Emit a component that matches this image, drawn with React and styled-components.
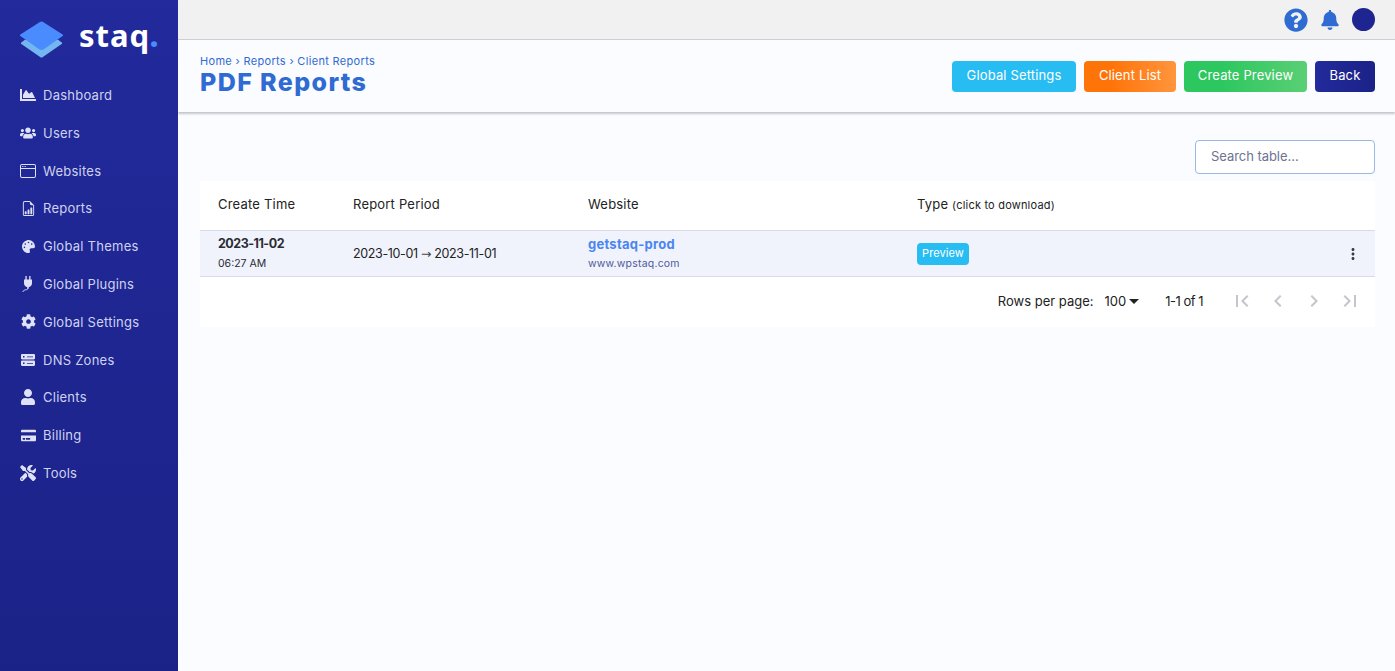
import React from 'react';
import styled, { createGlobalStyle } from 'styled-components';
import {
  FaChartArea, FaUsers, FaPalette, FaCog, FaUser, FaCreditCard, FaTools,
  FaQuestionCircle, FaBell,
} from 'react-icons/fa';
import { BsFileEarmarkBarGraph, BsWindow } from 'react-icons/bs';
import {
  MdMoreVert, MdFirstPage, MdLastPage, MdChevronLeft, MdChevronRight, MdArrowDropDown,
} from 'react-icons/md';

const FONT = `Inter, "Noto Sans", "Liberation Sans", sans-serif`;

const GlobalStyle = createGlobalStyle`
  html, body { margin: 0; height: 100%; }
  #root { height: 100%; }
  body {
    font-family: ${FONT};
    background: #fbfcff;
    color: #222;
    overflow: hidden;
  }
  * { box-sizing: border-box; }
`;

const Shell = styled.div`
  display: flex;
  width: 100%;
  height: 671px;
`;

const Sidebar = styled.aside`
  width: 178px;
  flex: none;
  background: linear-gradient(180deg, #222a9c 0%, #1b2287 100%);
  display: flex;
  flex-direction: column;
`;

const Brand = styled.div`
  display: flex;
  align-items: center;
  gap: 16px;
  height: 76.2px;
  padding: 4px 0 0 20px;
`;

const BrandName = styled.span`
  font-family: "Noto Sans", sans-serif;
  font-weight: 700;
  font-size: 31px;
  line-height: 1;
  color: #fff;
  margin-top: -9px;
  letter-spacing: 1px;

  i {
    font-style: normal;
    font-size: 34px;
    line-height: 0;
    margin-left: -1px;
    color: #4a8cff;
  }
`;

const Nav = styled.nav`
  display: flex;
  flex-direction: column;
`;

const NavItem = styled.a`
  display: flex;
  align-items: center;
  height: 37.8px;
  padding-left: 20px;
  color: #cfd3f0;
  font-size: 13px;
  letter-spacing: 0.25px;
`;

const NavIcon = styled.span`
  display: flex;
  align-items: center;
  justify-content: center;
  width: 16px;
  margin-right: 7px;
  color: #dfe2f7;

  svg {
    width: ${(p) => p.$size || 16}px;
    height: ${(p) => p.$size || 16}px;
  }
`;

const Main = styled.div`
  flex: 1;
  min-width: 0;
  display: flex;
  flex-direction: column;
`;

const TopBar = styled.header`
  height: 40px;
  flex: none;
  background: #f1f1f1;
  border-bottom: 1px solid #cfcfd2;
  display: flex;
  align-items: center;
  justify-content: flex-end;
  gap: 12px;
  padding-right: 20px;
`;

const TopIcon = styled.span`
  display: flex;
  color: #2f6bd2;

  svg {
    width: ${(p) => p.$size}px;
    height: ${(p) => p.$size}px;
  }
`;

const Avatar = styled.span`
  width: 23px;
  height: 23px;
  border-radius: 50%;
  background: #1f2590;
`;

const PageHead = styled.div`
  height: 72px;
  flex: none;
  display: flex;
  align-items: center;
  justify-content: space-between;
  padding: 0 20px 0 22px;
  background: #fbfcff;
  box-shadow: 0 2px 2px #c4c6ce;
  clip-path: inset(0 0 -5px 0);
`;

const HeadText = styled.div`
  margin-top: -2px;
`;

const Crumbs = styled.div`
  font-size: 11px;
  line-height: 13px;
  color: #2f6bd2;
  letter-spacing: 0.32px;
`;

const Title = styled.h1`
  margin: 0;
  font-size: 25px;
  line-height: 28px;
  font-weight: 800;
  letter-spacing: 1.4px;
  color: #2f6bd2;
`;

const Actions = styled.div`
  display: flex;
  gap: 8px;
  margin-top: 1px;
`;

const ActionButton = styled.button`
  height: 31px;
  width: ${(p) => p.$w}px;
  padding: 0 0 3px;
  border: 0;
  border-radius: 4px;
  font-family: ${FONT};
  font-size: 13px;
  letter-spacing: 0.15px;
  color: #fff;
  background: ${(p) => p.$bg};
`;

const Content = styled.main`
  flex: 1;
  padding: 28px 20px 0 22px;
`;

const SearchRow = styled.div`
  display: flex;
  justify-content: flex-end;
  margin-bottom: 7px;
`;

const SearchInput = styled.input`
  width: 180px;
  height: 34px;
  border: 1px solid #9ab8e2;
  border-radius: 4px;
  background: #fff;
  padding: 0 15px 2px;
  font-family: ${FONT};
  font-size: 13px;
  letter-spacing: -0.05px;
  color: #333;

  &::placeholder {
    color: #6d7390;
    opacity: 1;
  }
`;

const Card = styled.section`
  background: #fff;
`;

const Grid = styled.div`
  display: grid;
  grid-template-columns: 135px 235px 329px 1fr 44px;
  align-items: center;
  height: ${(p) => p.$h}px;
  padding-left: 18px;
  font-size: 13px;
  color: #222;
`;

const HeadRow = styled(Grid)`
  padding-bottom: 3px;
  letter-spacing: 0.2px;
`;

const BodyRow = styled(Grid)`
  background: #f0f3fb;
  border-top: 1px solid #d9dce8;
  border-bottom: 1px solid #d9dce8;
`;

const Small = styled.span`
  font-size: 11px;
`;

const Period = styled.span`
  font-size: 12.5px;
  letter-spacing: -0.35px;
`;

const Arrow = styled.span`
  font-family: "DejaVu Sans", sans-serif;
  color: #444;
`;

const Strong = styled.div`
  font-weight: 700;
  font-size: ${(p) => (p.$link ? 13 : 12.5)}px;
  line-height: 16px;
  margin-top: -2px;
  letter-spacing: ${(p) => (p.$link ? 0.25 : -0.5)}px;
  color: ${(p) => (p.$link ? '#4a86ef' : '#2b2b33')};
`;

const Sub = styled.div`
  font-size: 10.5px;
  line-height: 13px;
  margin-top: 5px;
  letter-spacing: ${(p) => (p.$link ? 0.2 : 0)}px;
  color: ${(p) => (p.$link ? '#4f5a9c' : '#2b2b33')};
`;

const Badge = styled.span`
  display: inline-flex;
  align-items: center;
  height: 22px;
  padding: 0 5px 1px;
  border-radius: 4px;
  background: #27bdf3;
  color: #fff;
  font-size: 11px;
  letter-spacing: 0.1px;
`;

const RowMenu = styled.span`
  display: flex;
  justify-content: center;
  color: #3a3a48;

  svg {
    width: 18px;
    height: 18px;
  }
`;

const Pager = styled.div`
  height: 50px;
  display: flex;
  align-items: center;
  justify-content: flex-end;
  padding-right: 7px;
  padding-bottom: 3px;
  font-size: 13px;
  color: #222;
`;

const PerPage = styled.span`
  display: flex;
  align-items: center;
  margin-left: 11px;
  margin-right: 19px;

  svg {
    width: 24px;
    height: 24px;
    margin-left: -4px;
  }
`;

const PageCount = styled.span`
  margin-right: 21px;
  letter-spacing: -0.5px;
`;

const PageButton = styled.span`
  display: flex;
  width: 36px;
  justify-content: center;
  color: #c4c6cc;

  svg {
    width: 24px;
    height: 24px;
  }
`;

const LogoMark = () => (
  <svg width="43" height="38" viewBox="1 1 44 38.500">
    <path d="M2 23 L6 20 H40 L44 23 V24 L24 38 Q23 39 22 38 L2 24 Z" fill="#74b6f0" />
    <path d="M1 15 L21 2 Q23 0.5 25 2 L45 15 V16 L25 30 Q23 31 21 30 L1 16 Z" fill="#4a8cff" />
  </svg>
);

const PlugIcon = () => (
  <svg viewBox="0 0 16 16" fill="currentColor">
    <rect x="5.4" y="0" width="1.3" height="4" />
    <rect x="9.2" y="0" width="1.3" height="4" />
    <path d="M4 3.6h8v3.6c0 2.1-1.5 3.6-3.2 3.9v1.3H7.2v-1.3C5.5 10.8 4 9.3 4 7.2z" />
    <path d="M8 12c0 2.2-2.6 1.5-4 2.3-.6.4-1 .9-1.3 1.6" fill="none" stroke="currentColor" strokeWidth="0.9" />
  </svg>
);

const ZonesIcon = () => (
  <svg viewBox="0 0 14 14" fill="currentColor">
    <path fillRule="evenodd" d="M1.2 1h11.600c.7 0 1.200.5 1.200 1.200v3.100c0 .7-.5 1.200-1.200 1.200H1.200C.5 6.500 0 6 0 5.300V2.200C0 1.500.5 1 1.200 1zM2 3v1.500h1.500V3zm4 .4v.8h6v-.8z" />
    <path fillRule="evenodd" d="M1.200 7.500h11.600c.7 0 1.200.5 1.200 1.200v3.100c0 .7-.5 1.200-1.200 1.200H1.200c-.7 0-1.200-.5-1.200-1.200V8.700c0-.7.5-1.200 1.200-1.200zM2 9.500V11h1.500V9.500zm4 .4v.8h6v-.8z" />
  </svg>
);

const NAV = [
  ['Dashboard', <FaChartArea />, 16],
  ['Users', <FaUsers />, 16],
  ['Websites', <BsWindow />, 16],
  ['Reports', <BsFileEarmarkBarGraph />, 15],
  ['Global Themes', <FaPalette />, 13],
  ['Global Plugins', <PlugIcon />, 16],
  ['Global Settings', <FaCog />, 15],
  ['DNS Zones', <ZonesIcon />, 14],
  ['Clients', <FaUser />, 16],
  ['Billing', <FaCreditCard />, 15],
  ['Tools', <FaTools />, 16],
];

const BUTTONS = [
  ['Global Settings', 124, '#27bdf3'],
  ['Client List', 92, 'linear-gradient(90deg, #ff7409 30%, #ff953d 100%)'],
  ['Create Preview', 123, 'linear-gradient(90deg, #2cc75f 30%, #5bcf75 100%)'],
  ['Back', 60, 'linear-gradient(90deg, #222a9c, #1b2287)'],
];

export default function App() {
  return (
    <>
      <GlobalStyle />
      <Shell>
        <Sidebar>
          <Brand>
            <LogoMark />
            <BrandName>staq<i>.</i></BrandName>
          </Brand>
          <Nav>
            {NAV.map(([label, icon, size]) => (
              <NavItem key={label}>
                <NavIcon $size={size}>{icon}</NavIcon>
                {label}
              </NavItem>
            ))}
          </Nav>
        </Sidebar>
        <Main>
          <TopBar>
            <TopIcon $size={24}><FaQuestionCircle /></TopIcon>
            <TopIcon $size={20}><FaBell /></TopIcon>
            <Avatar />
          </TopBar>
          <PageHead>
            <HeadText>
              <Crumbs>Home › Reports › Client Reports</Crumbs>
              <Title>PDF Reports</Title>
            </HeadText>
            <Actions>
              {BUTTONS.map(([label, w, bg]) => (
                <ActionButton key={label} $w={w} $bg={bg}>{label}</ActionButton>
              ))}
            </Actions>
          </PageHead>
          <Content>
            <SearchRow>
              <SearchInput placeholder="Search table..." />
            </SearchRow>
            <Card>
              <HeadRow $h={49}>
                <span>Create Time</span>
                <span>Report Period</span>
                <span>Website</span>
                <span>Type <Small>(click to download)</Small></span>
              </HeadRow>
              <BodyRow $h={47}>
                <div>
                  <Strong>2023-11-02</Strong>
                  <Sub>06:27 AM</Sub>
                </div>
                <Period>2023-10-01 <Arrow>→</Arrow> 2023-11-01</Period>
                <div>
                  <Strong $link>getstaq-prod</Strong>
                  <Sub $link>www.wpstaq.com</Sub>
                </div>
                <div><Badge>Preview</Badge></div>
                <RowMenu><MdMoreVert /></RowMenu>
              </BodyRow>
              <Pager>
                <span>Rows per page:</span>
                <PerPage>100<MdArrowDropDown /></PerPage>
                <PageCount>1-1 of 1</PageCount>
                <PageButton><MdFirstPage /></PageButton>
                <PageButton><MdChevronLeft /></PageButton>
                <PageButton><MdChevronRight /></PageButton>
                <PageButton><MdLastPage /></PageButton>
              </Pager>
            </Card>
          </Content>
        </Main>
      </Shell>
    </>
  );
}
